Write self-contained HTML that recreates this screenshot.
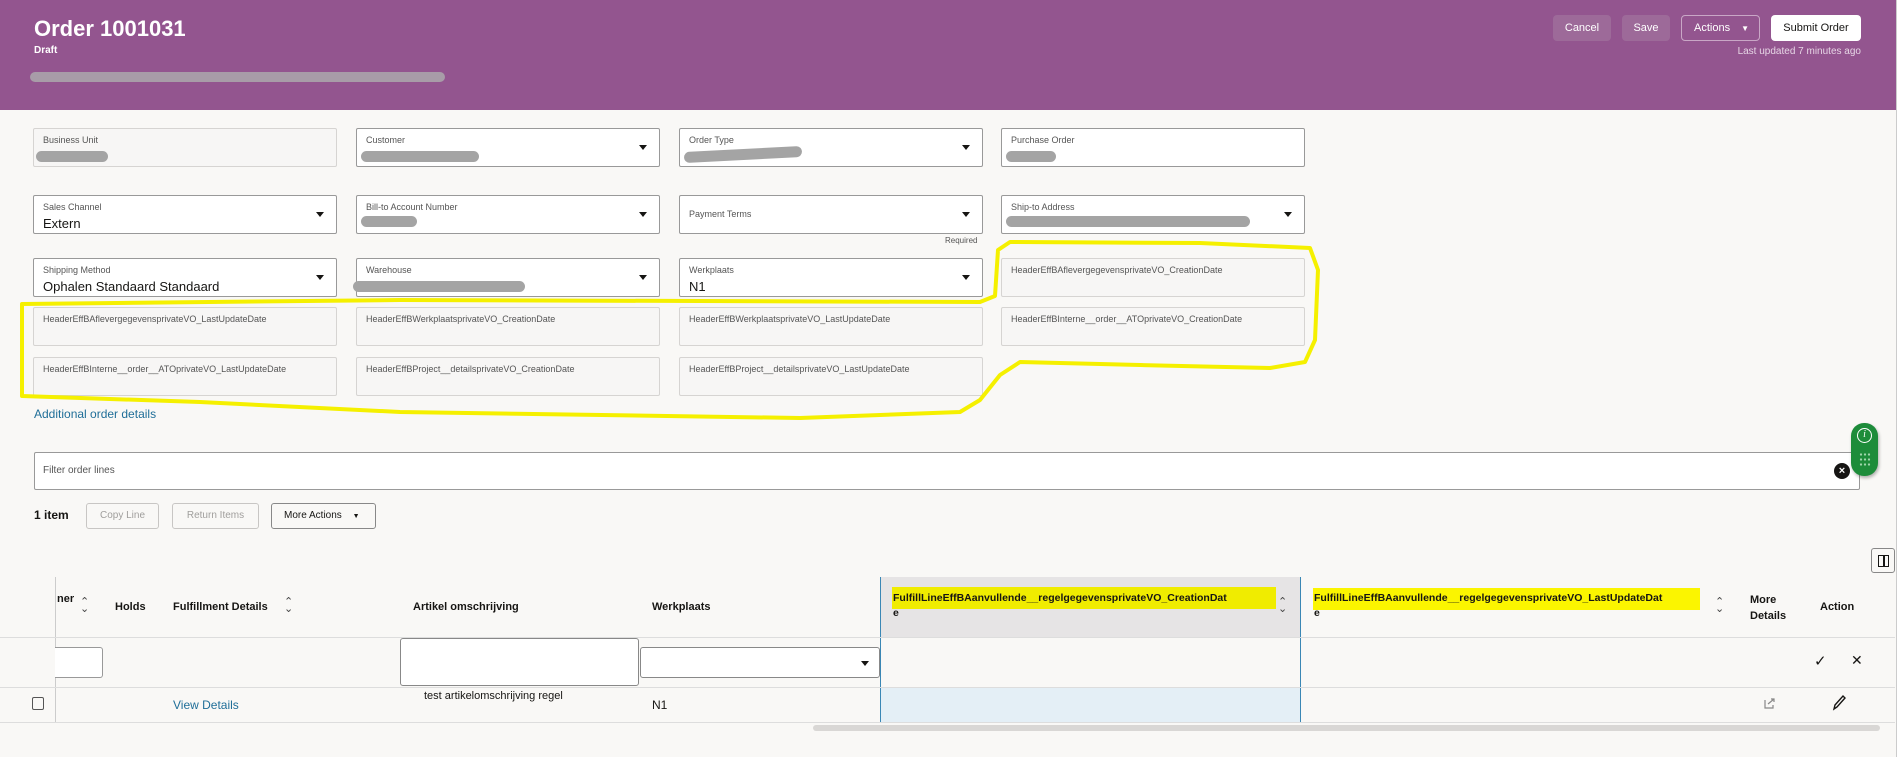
<!DOCTYPE html>
<html><head><meta charset="utf-8"><style>
*{box-sizing:border-box;margin:0;padding:0}
body{width:1903px;height:757px;overflow:hidden;background:#f9f8f6;font-family:"Liberation Sans",sans-serif;color:#161513;position:relative}
.a{position:absolute}
.hdr{left:0;top:0;width:1896px;height:110px;background:#93558f}
.btn{position:absolute;height:26px;border-radius:4px;font-size:11px;line-height:26px;text-align:center;color:#fff}
.f{position:absolute;width:304px;height:39px;border:1px solid #999;background:#fff;border-radius:2px}
.f.ro{background:#f7f6f5;border-color:#d6d4d2}
.f .l{position:absolute;left:9px;top:6px;font-size:9px;color:#555}
.f .v{position:absolute;left:9px;top:20px;font-size:13px;color:#161513}
.f .dd{position:absolute;right:12px;top:16px;width:0;height:0;border-left:4px solid transparent;border-right:4px solid transparent;border-top:5px solid #161513}
.f .c{position:absolute;left:9px;top:13px;font-size:9px;color:#555}
.blur{position:absolute;height:11px;border-radius:6px;background:#a4a4a4}
.th{position:absolute;font-size:11px;color:#161513;font-weight:bold}
.tb{position:absolute;height:26px;border:1px solid #c8c6c4;border-radius:3px;font-size:10px;line-height:24px;text-align:center;color:#a09e9c;background:#f9f8f6}
.sort{position:absolute;font-size:11px;color:#444;line-height:7px}
</style></head><body>
<div class="a hdr"></div>
<div class="a" style="left:1896px;top:0;width:7px;height:757px;background:#fff;border-left:1px solid #ccc"></div>
<div class="a" style="left:34px;top:16px;font-size:22px;font-weight:bold;color:#fff">Order 1001031</div>
<div class="a" style="left:34px;top:45px;font-size:10px;font-weight:bold;color:#fff">Draft</div>
<div class="blur" style="left:30px;top:72px;width:415px;height:10px;background:#a89ca8"></div>
<div class="btn" style="left:1553px;top:15px;width:58px;background:#9d6a99">Cancel</div>
<div class="btn" style="left:1622px;top:15px;width:48px;background:#9d6a99">Save</div>
<div class="btn" style="left:1681px;top:15px;width:79px;border:1px solid #c9a7c6;text-align:left;padding-left:12px;line-height:24px">Actions <span style="font-size:8px;margin-left:8px">▼</span></div>
<div class="btn" style="left:1771px;top:15px;width:90px;background:#fff;color:#161513">Submit Order</div>
<div class="a" style="right:42px;top:46px;font-size:10px;color:#e6d5e5">Last updated 7 minutes ago</div>

<div class="f ro" style="left:33px;top:128px"><div class="l">Business Unit</div><div class="blur" style="left:2px;top:22px;width:72px"></div></div>
<div class="f" style="left:356px;top:128px"><div class="l">Customer</div><div class="blur" style="left:4px;top:22px;width:118px"></div><div class="dd"></div></div>
<div class="f" style="left:679px;top:128px"><div class="l">Order Type</div><div class="blur" style="left:4px;top:20px;width:118px;transform:rotate(-3deg)"></div><div class="dd"></div></div>
<div class="f" style="left:1001px;top:128px"><div class="l">Purchase Order</div><div class="blur" style="left:4px;top:22px;width:50px"></div></div>
<div class="f" style="left:33px;top:195px"><div class="l">Sales Channel</div><div class="v">Extern</div><div class="dd"></div></div>
<div class="f" style="left:356px;top:195px"><div class="l">Bill-to Account Number</div><div class="blur" style="left:4px;top:20px;width:56px"></div><div class="dd"></div></div>
<div class="f" style="left:679px;top:195px"><div class="c">Payment Terms</div><div class="dd"></div></div>
<div class="a" style="left:945px;top:236px;font-size:8px;color:#555">Required</div>
<div class="f" style="left:1001px;top:195px"><div class="l">Ship-to Address</div><div class="blur" style="left:4px;top:20px;width:244px"></div><div class="dd"></div></div>
<div class="f" style="left:33px;top:258px"><div class="l">Shipping Method</div><div class="v">Ophalen Standaard Standaard</div><div class="dd"></div></div>
<div class="f" style="left:356px;top:258px"><div class="l">Warehouse</div><div class="blur" style="left:-4px;top:22px;width:172px"></div><div class="dd"></div></div>
<div class="f" style="left:679px;top:258px"><div class="l">Werkplaats</div><div class="v">N1</div><div class="dd"></div></div>
<div class="f ro" style="left:1001px;top:258px"><div class="l">HeaderEffBAflevergegevensprivateVO_CreationDate</div></div>
<div class="f ro" style="left:33px;top:307px"><div class="l">HeaderEffBAflevergegevensprivateVO_LastUpdateDate</div></div>
<div class="f ro" style="left:356px;top:307px"><div class="l">HeaderEffBWerkplaatsprivateVO_CreationDate</div></div>
<div class="f ro" style="left:679px;top:307px"><div class="l">HeaderEffBWerkplaatsprivateVO_LastUpdateDate</div></div>
<div class="f ro" style="left:1001px;top:307px"><div class="l">HeaderEffBInterne__order__ATOprivateVO_CreationDate</div></div>
<div class="f ro" style="left:33px;top:357px"><div class="l">HeaderEffBInterne__order__ATOprivateVO_LastUpdateDate</div></div>
<div class="f ro" style="left:356px;top:357px"><div class="l">HeaderEffBProject__detailsprivateVO_CreationDate</div></div>
<div class="f ro" style="left:679px;top:357px"><div class="l">HeaderEffBProject__detailsprivateVO_LastUpdateDate</div></div>

<svg class="a" style="left:0;top:0" width="1903" height="757"><path d="M22 304 L400 300 L980 302 L995 296 L998 250 L1010 242 L1200 243 L1310 248 L1318 270 L1315 340 L1305 362 L1270 368 L1140 365 L1020 362 L1000 375 L980 400 L960 412 L800 418 L400 412 L200 402 L22 396 Z" fill="none" stroke="#f5f000" stroke-width="4" stroke-linejoin="round"/></svg>

<div class="a" style="left:34px;top:407px;font-size:12px;color:#1f6e98">Additional order details</div>

<div class="a" style="left:34px;top:452px;width:1826px;height:38px;background:#fff;border:1px solid #999;border-radius:2px"></div>
<div class="a" style="left:43px;top:465px;font-size:10px;color:#555">Filter order lines</div>
<div class="a" style="left:1834px;top:463px;width:16px;height:16px;border-radius:50%;background:#161513;color:#fff;font-size:11px;line-height:16px;text-align:center;font-weight:bold">×</div>
<div class="a" style="left:1851px;top:423px;width:27px;height:53px;border-radius:13px;background:#1d8c3a;box-shadow:1px 2px 3px rgba(0,0,0,.3)"></div>
<div class="a" style="left:1857px;top:428px;width:15px;height:15px;border-radius:50%;border:1.5px solid #fff;color:#fff;font-size:10px;line-height:12px;text-align:center;font-style:italic;font-family:'Liberation Serif',serif">i</div>
<div class="a" style="left:1859px;top:452px;width:12px;height:15px;background:radial-gradient(circle,#9fd6ab 1px,transparent 1.3px) 0 0/4px 5px"></div>

<div class="a" style="left:34px;top:508px;font-size:12px;font-weight:bold">1 item</div>
<div class="tb" style="left:86px;top:503px;width:73px">Copy Line</div>
<div class="tb" style="left:172px;top:503px;width:87px">Return Items</div>
<div class="tb" style="left:271px;top:503px;width:105px;border-color:#888;color:#161513;text-align:left;padding-left:12px">More Actions <span style="font-size:7px;margin-left:8px">▼</span></div>
<div class="a" style="left:1871px;top:548px;width:24px;height:25px;border:1px solid #888;border-radius:3px;background:#f9f8f6"><div class="a" style="left:6px;top:6px;width:11px;height:12px;border:1.5px solid #161513"></div><div class="a" style="left:11px;top:6px;width:1.5px;height:12px;background:#161513"></div></div>

<div class="a" style="left:881px;top:577px;width:420px;height:60px;background:#e6e4e5"></div>
<div class="a" style="left:881px;top:687px;width:420px;height:35px;background:#e4eff6"></div>
<div class="a" style="left:55px;top:577px;width:1px;height:145px;background:#ccc"></div>
<div class="a" style="left:880px;top:577px;width:1px;height:145px;background:#3a87b5"></div>
<div class="a" style="left:1300px;top:577px;width:1px;height:145px;background:#3a87b5"></div>
<div class="a" style="left:0;top:637px;width:1895px;height:1px;background:#ddd"></div>
<div class="a" style="left:0;top:687px;width:1895px;height:1px;background:#ddd"></div>
<div class="a" style="left:0;top:722px;width:1895px;height:1px;background:#ddd"></div>
<div class="a" style="left:813px;top:725px;width:1067px;height:6px;border-radius:3px;background:#d9d7d5"></div>

<div class="a" style="left:892px;top:587px;width:384px;height:22px;background:#f0ec00"></div>
<div class="a" style="left:1313px;top:588px;width:387px;height:22px;background:#fbf500"></div>
<div class="th" style="left:57px;top:593px">ner</div>
<div class="sort" style="left:80px;top:599px">⌃<br>⌄</div>
<div class="th" style="left:115px;top:601px">Holds</div>
<div class="th" style="left:173px;top:601px">Fulfillment Details</div>
<div class="sort" style="left:284px;top:599px">⌃<br>⌄</div>
<div class="th" style="left:413px;top:601px">Artikel omschrijving</div>
<div class="th" style="left:652px;top:601px">Werkplaats</div>
<div class="th" style="left:893px;top:592px;font-size:10.5px">FulfillLineEffBAanvullende__regelgegevensprivateVO_CreationDat<br><span style="line-height:18px">e</span></div>
<div class="sort" style="left:1278px;top:599px">⌃<br>⌄</div>
<div class="th" style="left:1314px;top:592px;font-size:10.5px">FulfillLineEffBAanvullende__regelgegevensprivateVO_LastUpdateDat<br><span style="line-height:18px">e</span></div>
<div class="sort" style="left:1715px;top:599px">⌃<br>⌄</div>
<div class="th" style="left:1750px;top:592px;line-height:16px">More<br>Details</div>
<div class="th" style="left:1820px;top:601px">Action</div>

<div class="a" style="left:55px;top:647px;width:48px;height:31px;border:1px solid #999;border-left:none;border-radius:0 3px 3px 0;background:#fff"></div>
<div class="a" style="left:400px;top:638px;width:239px;height:48px;border:1px solid #888;border-radius:3px;background:#fff"></div>
<div class="a" style="left:640px;top:647px;width:240px;height:31px;border:1px solid #888;border-radius:3px;background:#fff"><div class="a" style="right:10px;top:13px;border-left:4px solid transparent;border-right:4px solid transparent;border-top:5px solid #161513"></div></div>
<div class="a" style="left:1814px;top:652px;font-size:15px">✓</div>
<div class="a" style="left:1851px;top:652px;font-size:14px">✕</div>

<div class="a" style="left:32px;top:697px;width:12px;height:13px;border:1.5px solid #555;border-radius:2px"></div>
<div class="a" style="left:173px;top:698px;font-size:12px;color:#1f6e98">View Details</div>
<div class="a" style="left:424px;top:690px;font-size:11px">test artikelomschrijving regel</div>
<div class="a" style="left:652px;top:698px;font-size:12px">N1</div>
<svg class="a" style="left:1763px;top:696px" width="14" height="14"><path d="M2 4 V12 H10 V9" fill="none" stroke="#888" stroke-width="1.2"/><path d="M5 8 L11 3 M8 3 H11 V6" fill="none" stroke="#888" stroke-width="1.2"/></svg>
<svg class="a" style="left:1831px;top:694px" width="16" height="18"><path d="M3 15 L4 11 L12 2 L14 4 L6 13 Z" fill="none" stroke="#161513" stroke-width="1.4"/></svg>
</body></html>
